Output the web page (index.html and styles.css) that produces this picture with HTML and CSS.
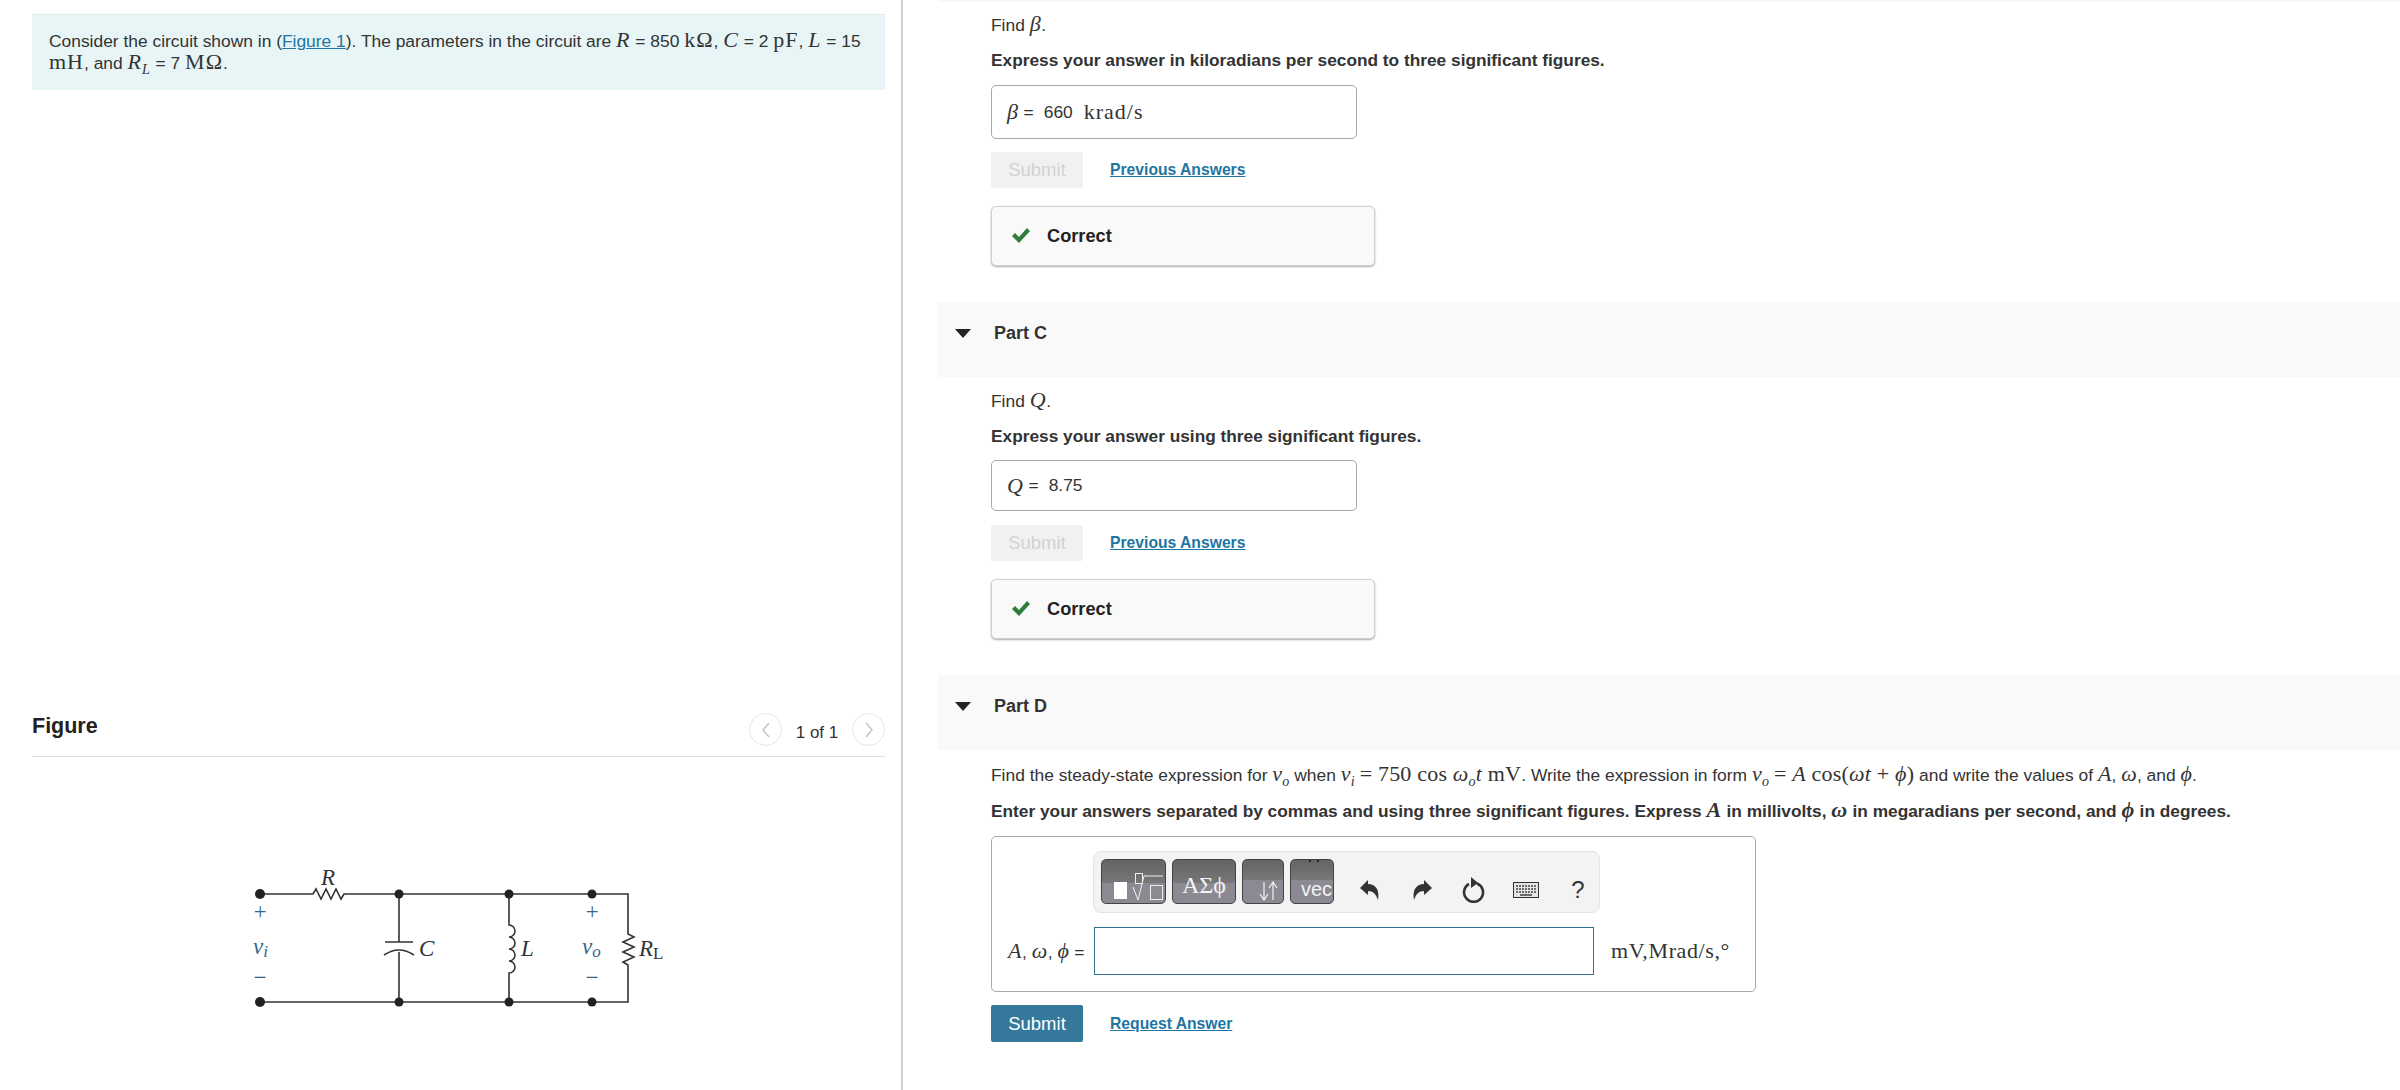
FILE: index.html
```html
<!DOCTYPE html>
<html>
<head>
<title>Circuit Problem</title>
<link rel="stylesheet" href="styles.css">
</head>
<body>
<div class="page">
  <div class="left-pane">
    <div class="info-box">
      Consider the circuit shown in (<a href="#">Figure 1</a>). The parameters in the circuit are <i class="m big">R</i> = 850 <span class="m big">kΩ</span>, <i class="m big">C</i> = 2 <span class="m big">pF</span>, <i class="m big">L</i> = 15 <span class="m big">mH</span>, and <i class="m big">R<sub>L</sub></i> = 7 <span class="m big">MΩ</span>.
    </div>

    <div class="figure-head">
      <h2>Figure</h2>
      <div class="pager">
        <span class="pager-btn">
          <svg width="12" height="18" viewBox="0 0 12 18"><path d="M9 2 L3 9 L9 16" fill="none" stroke="#c4c4c4" stroke-width="1.5"/></svg>
        </span>
        <span class="pager-text">1 of 1</span>
        <span class="pager-btn">
          <svg width="12" height="18" viewBox="0 0 12 18"><path d="M3 2 L9 9 L3 16" fill="none" stroke="#c4c4c4" stroke-width="1.5"/></svg>
        </span>
      </div>
    </div>

    <svg class="circuit" width="460" height="170" viewBox="0 0 460 170">
      <g fill="none" stroke="#333" stroke-width="1.6">
        <path d="M40 44 H93 l3 -5 l5 10 l5 -10 l5 10 l5 -10 l5 10 l3 -5 H372 H408 V84 l6 3 l-11 5 l11 5 l-11 5 l11 5 l-11 5 l5 3 V152 H40"/>
        <path d="M179 44 V92 M165 92 H193 M179 102 V152"/>
        <path d="M164 105 Q179 95 194 105"/>
        <path d="M289 44 V75 a6 6 0 0 1 0 12 a6 6 0 0 1 0 12 a6 6 0 0 1 0 12 a6 6 0 0 1 0 12 V152"/>
      </g>
      <g fill="#222">
        <circle cx="40" cy="44" r="5"/>
        <circle cx="179" cy="44" r="4.5"/>
        <circle cx="289" cy="44" r="4.5"/>
        <circle cx="372" cy="44" r="4.5"/>
        <circle cx="40" cy="152" r="5"/>
        <circle cx="179" cy="152" r="4.5"/>
        <circle cx="289" cy="152" r="4.5"/>
        <circle cx="372" cy="152" r="4.5"/>
      </g>
      <g class="circuit-label">
        <text x="108" y="35" text-anchor="middle">R</text>
        <text x="199" y="106">C</text>
        <text x="301" y="106">L</text>
        <text x="419" y="106">R<tspan class="circuit-sub" dy="3">L</tspan></text>
      </g>
      <g class="circuit-blue">
        <text x="40" y="69" text-anchor="middle">+</text>
        <text x="40" y="135" text-anchor="middle">−</text>
        <text x="372" y="69" text-anchor="middle">+</text>
        <text x="372" y="135" text-anchor="middle">−</text>
        <text x="33" y="104">v<tspan class="circuit-sub" dy="3">i</tspan></text>
        <text x="362" y="104">v<tspan class="circuit-sub" dy="3">o</tspan></text>
      </g>
    </svg>
  </div>

  <div class="right-pane">
    <div class="top-strip"></div>

    <div class="part-body first">
      <p class="prompt">Find <i class="m big">β</i>.</p>
      <p class="instr">Express your answer in kiloradians per second to three significant figures.</p>
      <div class="answer tall">
        <i class="m big">β</i><span class="eq">=</span><span class="value">660</span><span class="m big unit">krad/s</span>
      </div>
      <div class="actions">
        <span class="btn disabled">Submit</span>
        <a class="action-link" href="#">Previous Answers</a>
      </div>
      <div class="feedback">
        <svg width="20" height="16" viewBox="0 0 20 16"><path d="M1 8 L4 5 L8 9 L16 0 L19 3 L8 15 Z" fill="#2e7d3a"/></svg>
        <span>Correct</span>
      </div>
    </div>

    <div class="part-band"><span class="caret"></span><span class="part-title">Part C</span></div>

    <div class="part-body">
      <p class="prompt">Find <i class="m big">Q</i>.</p>
      <p class="instr">Express your answer using three significant figures.</p>
      <div class="answer">
        <i class="m big">Q</i><span class="eq">=</span><span class="value">8.75</span>
      </div>
      <div class="actions">
        <span class="btn disabled">Submit</span>
        <a class="action-link" href="#">Previous Answers</a>
      </div>
      <div class="feedback">
        <svg width="20" height="16" viewBox="0 0 20 16"><path d="M1 8 L4 5 L8 9 L16 0 L19 3 L8 15 Z" fill="#2e7d3a"/></svg>
        <span>Correct</span>
      </div>
    </div>

    <div class="part-band"><span class="caret"></span><span class="part-title">Part D</span></div>

    <div class="part-body">
      <p class="prompt prompt-math">Find the steady-state expression for <i class="m big">v<sub>o</sub></i> when <i class="m big">v<sub>i</sub></i> <span class="m big">= 750 cos <i>ω<sub>o</sub>t</i> mV</span>. Write the expression in form <i class="m big">v<sub>o</sub></i> <span class="m big">= <i>A</i> cos(<i>ωt</i> + <i>ϕ</i>)</span> and write the values of <i class="m big">A</i>, <i class="m big">ω</i>, and <i class="m big">ϕ</i>.</p>
      <p class="instr">Enter your answers separated by commas and using three significant figures. Express <i class="m big">A</i> in millivolts, <i class="m big">ω</i> in megaradians per second, and <i class="m big">ϕ</i> in degrees.</p>
      <div class="editor">
        <div class="toolbar">
          <span class="tool tool-sqrt">
            <svg width="65" height="44" viewBox="0 0 65 44">
              <rect x="13" y="23" width="13" height="17" fill="#fff"/>
              <g fill="none" stroke="#eee" stroke-width="1">
                <rect x="34.5" y="14.5" width="7" height="10"/>
                <path d="M32 28 L37 41 L43 17 H62"/>
                <rect x="49.5" y="26.5" width="12" height="14"/>
              </g>
            </svg>
          </span>
          <span class="tool tool-greek">ΑΣϕ</span>
          <span class="tool tool-arrows">
            <svg width="42" height="44" viewBox="0 0 42 44">
              <path d="M22 23 V40 M18 35 L22 41 L26 35 M31 41 V24 M27 29 L31 23 L35 29" fill="none" stroke="#f4f4f4" stroke-width="1.2"/>
            </svg>
          </span>
          <span class="tool tool-vec">vec</span>
          <span class="tool-icons">
            <span class="tool-cell">
              <svg width="20" height="20" viewBox="0 0 20 20"><path d="M0 8 L8 0 V4 C15 4 20 9 18 20 C16 14 13 11 8 11 V15 Z" fill="#333"/></svg>
            </span>
            <span class="tool-cell">
              <svg width="20" height="20" viewBox="0 0 20 20"><path d="M20 8 L12 0 V4 C5 4 0 9 2 20 C4 14 7 11 12 11 V15 Z" fill="#333"/></svg>
            </span>
            <span class="tool-cell">
              <svg width="24" height="26" viewBox="0 0 24 26"><path d="M7 7 A9.5 9.5 0 1 0 15 6.5" fill="none" stroke="#333" stroke-width="2.6"/><path d="M9 0 L16 6 L9 11 Z" fill="#333"/></svg>
            </span>
            <span class="tool-cell">
              <svg width="26" height="16" viewBox="0 0 26 16">
                <rect x="0.5" y="0.5" width="25" height="15" fill="#e4e4e4" stroke="#333"/>
                <path d="M3 4 H23 M3 7 H23 M3 10 H23" stroke="#444" stroke-width="1.5" stroke-dasharray="2 1"/>
                <path d="M7 13 H19" stroke="#444" stroke-width="1.5"/>
              </svg>
            </span>
            <span class="tool-cell tool-help">?</span>
          </span>
        </div>
        <div class="editor-row">
          <span class="editor-label"><i class="m big">A</i>, <i class="m big">ω</i>, <i class="m big">ϕ</i> =</span>
          <div class="editor-input"></div>
          <span class="m big editor-unit">mV,Mrad/s,°</span>
        </div>
      </div>
      <div class="actions actions-last">
        <span class="btn primary">Submit</span>
        <a class="action-link" href="#">Request Answer</a>
      </div>
    </div>
  </div>
</div>
</body>
</html>
```

FILE: styles.css
```css
html, body {
  margin: 0;
  height: 1090px;
  overflow: hidden;
  background: #fff;
}

body {
  font-family: "Liberation Sans", Arial, sans-serif;
  font-size: 17.4px;
  color: #333;
}

a {
  color: #1f76a3;
}

p {
  margin: 0;
}

.m {
  font-family: "Liberation Serif", serif;
}

.big {
  font-size: 22px;
  line-height: 1;
  letter-spacing: 0.6px;
}

sub {
  font-size: 14px;
  line-height: 0;
}

.page {
  display: flex;
  height: 1090px;
}

.left-pane {
  width: 903px;
  height: 1090px;
  box-sizing: border-box;
  border-right: 2px solid #c6d1de;
  padding: 14px 16px 0 32px;
  flex-shrink: 0;
}

.info-box {
  height: 76px;
  box-sizing: border-box;
  background: #e8f5f6;
  border-top: 1px solid #e3e8ea;
  padding: 14px 17px;
  line-height: 20px;
}

.info-box .big {
  letter-spacing: 1px;
}

.figure-head {
  display: flex;
  justify-content: space-between;
  align-items: flex-start;
  height: 44px;
  box-sizing: border-box;
  margin-top: 623px;
  border-bottom: 1px solid #dde1e6;
}

.figure-head h2 {
  margin: 1px 0 0;
  font-size: 21.5px;
  line-height: 24px;
  color: #222;
}

.pager {
  display: flex;
  align-items: center;
}

.pager-btn {
  display: flex;
  align-items: center;
  justify-content: center;
  width: 33px;
  height: 33px;
  box-sizing: border-box;
  border: 1px solid #e6e6e6;
  border-radius: 50%;
}

.pager-text {
  width: 70px;
  padding-top: 7px;
  text-align: center;
  font-size: 17px;
}

.circuit {
  display: block;
  margin: 93px 0 0 188px;
}

.circuit-label text {
  font-family: "Liberation Serif", serif;
  font-style: italic;
  font-size: 23px;
  fill: #333;
}

.circuit-sub {
  font-style: normal;
  font-size: 17px;
}

.circuit-blue text {
  font-family: "Liberation Serif", serif;
  font-style: italic;
  font-size: 23px;
  fill: #33658a;
}

.circuit-blue .circuit-sub {
  font-style: italic;
}

.right-pane {
  flex: 1;
  min-width: 0;
  padding-left: 35px;
}

.top-strip {
  height: 2px;
  background: #f7f7f7;
}

.part-body {
  padding: 12px 0 0 53px;
}

.part-body.first {
  padding-top: 11px;
}

.prompt {
  line-height: 24px;
}

.prompt-math {
  line-height: 26px;
}

.prompt-math .big {
  letter-spacing: 0.2px;
}

.instr {
  margin-top: 11px;
  line-height: 24px;
  font-size: 17.3px;
  font-weight: bold;
}

.answer {
  display: flex;
  align-items: center;
  width: 366px;
  height: 51px;
  box-sizing: border-box;
  margin-top: 12px;
  padding: 0 15px;
  border: 1px solid #a8a8a8;
  border-radius: 5px;
}

.answer.tall {
  height: 54px;
  margin-top: 13px;
}

.answer.tall + .actions {
  margin-top: 13px;
}

.eq {
  margin-left: 5px;
}

.value {
  margin-left: 10px;
}

.unit {
  margin-left: 11px;
  letter-spacing: 1px;
}

.actions {
  display: flex;
  align-items: center;
  gap: 27px;
  margin-top: 14px;
}

.btn {
  display: block;
  width: 92px;
  height: 36px;
  line-height: 36px;
  text-align: center;
  font-size: 18.5px;
  border-radius: 2px;
}

.btn.disabled {
  background: #f1f1f1;
  color: #d2d2d2;
}

.btn.primary {
  height: 37px;
  line-height: 37px;
  background: #36789b;
  color: #fff;
}

.action-link {
  font-size: 15.7px;
  font-weight: bold;
}

.feedback {
  display: flex;
  align-items: center;
  gap: 16px;
  width: 384px;
  height: 60px;
  box-sizing: border-box;
  margin-top: 18px;
  padding-left: 19px;
  background: #f9f9f9;
  border: 1px solid #d0d0d0;
  border-radius: 5px;
  box-shadow: 0 1px 2px #aaa;
  font-size: 18.2px;
  font-weight: bold;
  color: #222;
}

.part-band {
  display: flex;
  align-items: flex-start;
  height: 75px;
  box-sizing: border-box;
  margin-top: 36px;
  padding-top: 19px;
  background: #f9f9f9;
}

.caret {
  width: 0;
  height: 0;
  margin: 8px 0 0 17px;
  border-left: 8px solid transparent;
  border-right: 8px solid transparent;
  border-top: 9px solid #222;
}

.part-title {
  margin-left: 23px;
  font-size: 18px;
  line-height: 24px;
  font-weight: bold;
}

.editor {
  width: 765px;
  height: 156px;
  box-sizing: border-box;
  margin-top: 13px;
  padding: 14px 0 0 101px;
  border: 1px solid #a8a8a8;
  border-radius: 5px;
}

.toolbar {
  display: flex;
  align-items: flex-start;
  gap: 6px;
  width: 507px;
  height: 62px;
  box-sizing: border-box;
  padding: 7px 0 0 7px;
  background: #f3f3f3;
  border: 1px solid #e4e4e4;
  border-radius: 8px;
}

.tool {
  display: block;
  flex: none;
  position: relative;
  height: 45px;
  box-sizing: border-box;
  overflow: hidden;
  border: 1px solid #444;
  border-radius: 5px;
  background: linear-gradient(#646464, #777 53%, #8b8a93 53%, #8b8a93);
  color: #f4f4f4;
  text-align: center;
}

.tool svg {
  display: block;
  margin: -1px 0 0 -1px;
}

.tool-sqrt {
  width: 65px;
}

.tool-greek {
  width: 64px;
  padding-top: 12px;
  font-family: "Liberation Serif", serif;
  font-size: 24px;
  line-height: 26px;
}

.tool-arrows {
  width: 42px;
  background: linear-gradient(#646464, #777 46%, #8b8a93 46%, #8b8a93);
}

.tool-vec {
  width: 44px;
  padding: 17px 0 0 10px;
  background: linear-gradient(#646464, #777 46%, #8b8a93 46%, #8b8a93);
  font-size: 20px;
  line-height: 24px;
  text-align: left;
  white-space: nowrap;
}

.tool-vec::before {
  content: "";
  position: absolute;
  top: 0;
  left: 18px;
  width: 2px;
  height: 2px;
  background: #222;
  box-shadow: 8px 0 0 #222;
}

.tool-icons {
  display: flex;
  flex: none;
  align-items: center;
  height: 45px;
  margin: 8px 0 0 4px;
}

.tool-cell {
  display: flex;
  align-items: center;
  justify-content: center;
  width: 52px;
}

.tool-help {
  font-size: 24px;
}

.editor-row {
  display: flex;
  align-items: center;
  margin: 14px 0 0 -85px;
}

.editor-label {
  width: 86px;
  white-space: nowrap;
}

.editor-input {
  width: 500px;
  height: 48px;
  box-sizing: border-box;
  background: #fff;
  border: 1px solid #2f7194;
}

.editor-unit {
  margin-left: 17px;
  white-space: nowrap;
}

.actions-last {
  margin-top: 13px;
}
```
